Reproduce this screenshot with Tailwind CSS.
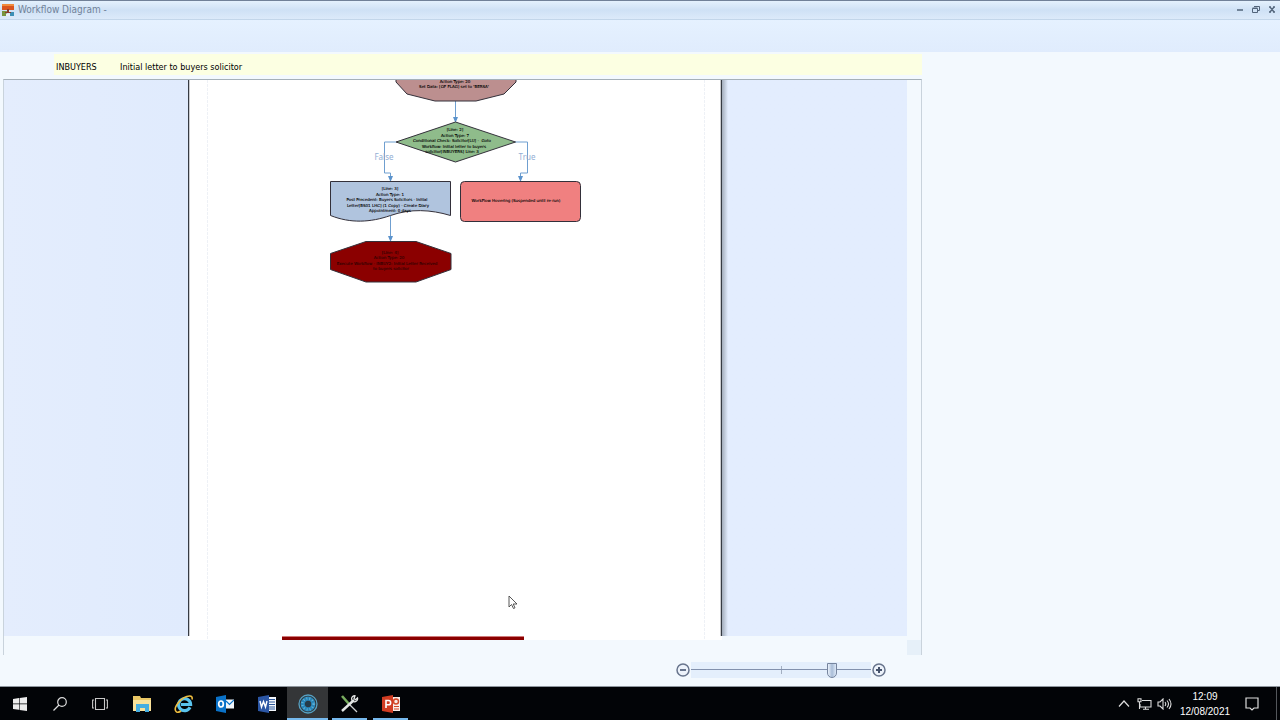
<!DOCTYPE html>
<html lang="en">
<head>
<meta charset="utf-8">
<meta name="viewport" content="width=device-width, initial-scale=1">
<title>Workflow Diagram</title>
<script src="https://cdn.jsdelivr.net/npm/@tailwindcss/browser@4"></script>
</head>
<body class="flex h-screen flex-col overflow-hidden bg-[#f3f9fe] font-['Noto_Sans','Liberation_Sans',sans-serif] text-black">

<header class="flex h-5 shrink-0 items-center justify-between border-t border-b border-t-[#718198] border-b-[#c3d6ea] bg-linear-to-b from-[#e4f1fd] via-[#cfe1f5] to-[#dceafa] pr-1 pl-0.5">
  <div class="flex items-center gap-1">
    <svg class="size-3" viewBox="0 0 12 12" aria-hidden="true"><path fill="#d9531e" d="M0 0h12v6H0z"/><path fill="#f08a3c" d="M0 0h12v2H0z"/><path fill="#78933d" d="M0 7h5l-1 5H0z"/><path fill="#3c8fb5" d="M8 8h4v4H8z"/><path fill="#8c3a2c" d="M5 5h2v3h2v1H3V8h2z"/><path fill="#e8eef4" d="M4 10h4v2H4z"/></svg>
    <h1 class="text-[10px] leading-4 text-[#71839a] font-['DejaVu_Sans_Condensed','Noto_Sans',sans-serif]">Workflow Diagram -</h1>
  </div>
  <div class="flex items-center gap-2 text-[#52647a]">
    <button type="button" aria-label="Minimize" class="h-3 w-2"><svg viewBox="0 0 8 12" class="h-3 w-2"><path d="M1 6h6" stroke="currentColor" stroke-width="1.500"/></svg></button>
    <button type="button" aria-label="Restore" class="h-3 w-2"><svg viewBox="0 0 8 12" class="h-3 w-2" fill="none" stroke="currentColor"><path d="M.5 4.500h5v4h-5zM.5 4h5M2 2.500h5.500v4H6" /></svg></button>
    <button type="button" aria-label="Close" class="h-3 w-2"><svg viewBox="0 0 8 12" class="h-3 w-2" stroke="currentColor" stroke-width="1.400"><path d="M2 3l4 5M6 3L2 8M1 3h2M5 3h2M1 8h2M5 8h2"/></svg></button>
  </div>
</header>

<div class="h-8 shrink-0 bg-linear-to-b from-[#e5f1ff] to-[#e0ecfd]"></div>

<main class="flex min-h-0 flex-1 flex-col">
  <section class="flex min-h-0 w-[72%] flex-1 flex-col">
    <div class="mt-0.5 mb-1 ml-[54px] flex h-[21px] shrink-0 items-center bg-[#fcffe2] text-[9px] leading-4 font-['DejaVu_Sans_Condensed','Noto_Sans',sans-serif]">
      <span class="w-[66px] pt-1 pl-0.5">INBUYERS</span>
      <span class="pt-1">Initial letter to buyers solicitor</span>
    </div>

    <div class="ml-[3px] flex min-h-0 flex-1 border-t border-r border-l border-t-[#a5b0b8] border-r-[#c9d3dc] border-l-[#c9d3dc]">
      <div class="mb-[19px] w-[184px] shrink-0 bg-linear-to-r from-[#e4edfd] to-[#e0ebfd]"></div>
      <div class="mb-[15px] w-[534px] shrink-0 overflow-hidden bg-white">
        <svg class="h-[560px] w-[534px]" viewBox="188 80 534 560" role="img" aria-label="Workflow diagram">
          <path d="M188.500 80v556M721.500 80v556" stroke="#363b43" stroke-width="1.500"/>
          <path d="M207.500 80v560M704.500 80v560" stroke="#eef1f6" stroke-dasharray="3 1"/>
          <g fill="none" stroke="#6f9fd0" stroke-width="1">
            <path d="M455.500 101v18M396 142h-11.500v31h6v6M515 142h12.500v31h-7v6M390.500 216v23"/>
          </g>
          <g fill="#5b93cc"><path d="M453 117h5l-2.500 6zM388 176h5l-2.500 6zM518 176h5l-2.500 6zM388 236h5l-2.500 6z"/></g>
          <g stroke="#33303a" stroke-width="1">
            <path fill="#bc8f8f" d="M396 78v4l11 12 28 7h41l28-7 12-12v-4z"/>
            <path fill="#8fbc8b" d="M396 142l59.500-20 60 20-60 20z"/>
            <path fill="#b0c4de" d="M330.500 181.500h120v34c-20-6-40-7-60 0s-40 8-60 0z"/>
            <rect fill="#f08080" x="460.500" y="181.500" width="120" height="40" rx="4"/>
            <path fill="#8b0000" d="M366 241.500h50l35 12v16l-35 12.500h-50l-35.500-12.500v-16z"/>
          </g>
          <path d="M282 638.500h242" stroke="#8b0000" stroke-width="3"/><path d="M282 636.500h242" stroke="#cf7a7a"/>
          <g class="font-['DejaVu_Sans','Noto_Sans',sans-serif] text-[4px]" text-anchor="middle" stroke="#000" stroke-width=".1">
            <text x="455" y="83">Action Type: 20</text>
            <text x="454" y="88">Set Data: [OF FLAG] set to 'BERSA'</text>
            <text x="455" y="131">[Line: 2]</text>
            <text x="455" y="137">Action Type: 7</text>
            <text x="452" y="142">Conditional Check: Solicitor[LU] - &#160;Goto</text>
            <text x="454" y="148">Workflow: Initial letter to buyers</text>
            <text x="452" y="153">solicitor[INBUYERS] Line: 3</text>
            <text x="390" y="190">[Line: 3]</text>
            <text x="390" y="196">Action Type: 1</text>
            <text x="387" y="201">Post Precedent: Buyers Solicitors - Initial</text>
            <text x="388" y="207">Letter[BS01 LHC] (1 Copy) - Create Diary</text>
            <text x="390" y="212">Appointment: 0 days</text>
            <text x="516" y="202">WorkFlow Hovering (Suspended until re-run)</text>
            <g opacity=".7">
              <text x="390" y="254">[Line: 4]</text>
              <text x="389" y="259">Action Type: 20</text>
              <text x="387" y="265">Execute Workflow - INBUY2: Initial Letter Received</text>
              <text x="391" y="270">to buyers solicitor</text>
            </g>
          </g>
          <g class="font-['Noto_Sans',sans-serif] text-[8px]" text-anchor="middle" fill="#92aed4"><text x="384" y="160">False</text><text x="527" y="160">True</text></g>
          <path d="M509 596v11l2.500-2.500 2 4 1.500-.7-1.800-3.800h3.800z" fill="#fff" stroke="#444" stroke-width=".9"/>
        </svg>
      </div>
      <div class="mb-[19px] flex-1 bg-linear-to-r from-[#a3adbb] via-[#e3edfe] via-[6px] to-[#e3edfe]"></div>
      <div class="flex w-[14px] flex-col justify-end"><div class="h-[15px] bg-[#e6f0f9]"></div></div>
    </div>
  </section>

  <div class="flex h-[31px] w-[72%] shrink-0 justify-end pr-9">
    <div class="flex h-[30px] items-center gap-px">
      <button type="button" aria-label="Zoom out" class="size-[14px]"><svg viewBox="0 0 14 14" fill="#edf3fb" stroke="#68758d"><circle cx="7" cy="7" r="6" stroke-width="1.500"/><path d="M4 7h6" stroke-width="2"/></svg></button>
      <div class="relative flex h-4 w-[180px] items-center bg-[#e4effc]">
        <span class="absolute top-1 left-1/2 h-2 w-px bg-[#a3afc1]"></span>
        <span class="absolute top-[7px] left-0 h-px w-full bg-[#8291ad]"></span>
        <input type="range" aria-label="Zoom" min="0" max="100" value="80" class="relative h-4 w-full appearance-none bg-transparent [&::-webkit-slider-thumb]:h-[15px] [&::-webkit-slider-thumb]:w-[10px] [&::-webkit-slider-thumb]:appearance-none [&::-webkit-slider-thumb]:rounded-b-[5px] [&::-webkit-slider-thumb]:border [&::-webkit-slider-thumb]:border-[#76859e] [&::-webkit-slider-thumb]:bg-linear-to-r [&::-webkit-slider-thumb]:from-[#eaf2fc] [&::-webkit-slider-thumb]:via-[#a9bdd7] [&::-webkit-slider-thumb]:to-[#dce8f7]">
      </div>
      <button type="button" aria-label="Zoom in" class="size-[14px]"><svg viewBox="0 0 14 14" fill="#edf3fb" stroke="#68758d"><circle cx="7" cy="7" r="6" stroke-width="1.500"/><path d="M4 7h6M7 4v6" stroke="#46536c" stroke-width="2"/></svg></button>
    </div>
  </div>
</main>

<footer class="flex h-[34px] shrink-0 items-stretch justify-between border-t border-[#8e969e] bg-[#020407] text-white">
  <nav class="flex" aria-label="Taskbar">
    <button type="button" aria-label="Start" class="grid w-10 place-items-center"><svg class="size-[14px]" viewBox="0 0 14 14" fill="#ececec"><path d="M0 2l6-.9v5.500H0zM6.600 1L14 0v6.600H6.600zM0 7.200h6v5.500L0 12zM6.600 7.200H14V14l-7.400-1z"/></svg></button>
    <button type="button" aria-label="Search" class="grid w-10 place-items-center"><svg class="size-[14px]" viewBox="0 0 14 14" fill="none" stroke="#dcdcdc" stroke-width="1.200"><circle cx="9" cy="5" r="4.300"/><path d="M6 8l-5.500 5.500"/></svg></button>
    <button type="button" aria-label="Task view" class="grid w-10 place-items-center"><svg class="size-4" viewBox="0 0 16 16" fill="none" stroke="#c8c8c8" stroke-width="1.100"><path d="M3.500 2.500h9v11h-9zM2 4H.6v8H2M14 4h1.400v8H14"/></svg></button>
    <button type="button" aria-label="File Explorer" class="grid w-11 place-items-center"><svg class="h-4 w-[18px]" viewBox="0 0 18 16"><path fill="#e9c765" d="M0 0h7l1 2h10v13H0z"/><path fill="#fae29a" d="M0 4h18v11H0z"/><path fill="#47aee0" d="M3 8h13v8h-4v-4H7v4H3z"/></svg></button>
    <button type="button" aria-label="Internet Explorer" class="grid w-10 place-items-center"><svg class="h-[18px] w-5" viewBox="0 0 20 18" fill="none"><path d="M16 12.300A6 6 0 1 1 16.600 9.500H7" stroke="#59c4ee" stroke-width="3.200"/><path d="M2.500 17C-2 13 8 1 15.500 1c2.500 0 3 1.500 2.500 3.500M2.500 17c1 .5 3 0 4.500-1" stroke="#eebd3f" stroke-width="1.600"/></svg></button>
    <button type="button" aria-label="Outlook" class="grid w-[42px] place-items-center"><svg class="size-[18px]" viewBox="0 0 18 18"><path fill="#0a72c8" d="M0 2l10-2v18L0 16z"/><path fill="#f1f6fb" d="M10 4.500h8v9h-8z"/><path d="M10 6l3.500 3.500L18 5" fill="none" stroke="#0a72c8" stroke-width="1.200"/><ellipse cx="5" cy="9" rx="2.300" ry="3" fill="none" stroke="#fff" stroke-width="1.700"/></svg></button>
    <button type="button" aria-label="Word" class="grid w-[41px] place-items-center"><svg class="size-[18px]" viewBox="0 0 18 18"><path fill="#f3f6fb" d="M10 2h8v14h-8z"/><path d="M11 4.500h6M11 7h6M11 9.500h6M11 12h6M11 14h6" stroke="#2b579a" stroke-width="1.200"/><path fill="#2b56a4" d="M0 2l11-2v18L0 16z"/><path d="M2 6l1.500 6L5.500 6.500 7.500 12 9 6" fill="none" stroke="#fff" stroke-width="1.400"/></svg></button>
    <button type="button" aria-label="Workflow application" class="grid w-[41px] place-items-center border-b-2 border-[#76b9ed] bg-[#343638]"><svg class="mt-0.5 size-5" viewBox="0 0 20 20" fill="none"><circle cx="10" cy="10" r="9" stroke="#56a0c2" stroke-width="1.300"/><circle cx="10" cy="10" r="5.300" stroke="#2684b7" stroke-width="4.200"/><circle cx="10" cy="10" r="5.600" stroke="#5fb0d6" stroke-width="2.500" stroke-dasharray="1 2"/><circle cx="10" cy="10" r="2.500" fill="#223c4c"/></svg></button>
    <button type="button" aria-label="Tools" class="ml-1 grid w-[35px] place-items-center border-b-2 border-[#76b9ed]"><svg class="mt-0.5 h-[18px] w-[19px]" viewBox="0 0 19 18" fill="none"><path d="M2 1l7 8" stroke="#78ad5f" stroke-width="2.600"/><path d="M9 9l8 8" stroke="#cfd2d3" stroke-width="1.200"/><path d="M2 16L14 5" stroke="#e4e6e5" stroke-width="2.400"/><path d="M17.500 3A3 3 0 1 1 15 .8L14 3.500l1.500 1.200z" stroke="#e4e6e5" stroke-width="1.300"/></svg></button>
    <button type="button" aria-label="PowerPoint" class="ml-1.5 grid w-[35px] place-items-center border-b-2 border-[#76b9ed]"><svg class="mt-0.5 size-[18px]" viewBox="0 0 18 18"><path fill="#f8ede9" d="M9 2h9v14H9z"/><path d="M12 11.500h5M12 14h5" stroke="#d24726"/><circle cx="14" cy="6.500" r="2.500" fill="none" stroke="#d24726" stroke-width="1.500"/><path fill="#d03c22" d="M0 2l11-2v18L0 16z"/><path d="M4 13V5.500h2.500a2 2 0 0 1 0 4.300H4" fill="none" stroke="#fff" stroke-width="1.600"/></svg></button>
  </nav>
  <div class="flex items-center">
    <button type="button" aria-label="Show hidden icons" class="w-5"><svg class="mx-auto h-3 w-3" viewBox="0 0 12 12" fill="none" stroke="#ddd" stroke-width="1.200"><path d="M1 8.500L6 3l5 5.500"/></svg></button>
    <button type="button" aria-label="Network" class="w-5"><svg class="mx-auto h-3 w-[15px]" viewBox="0 0 15 12" fill="none" stroke="#ddd" stroke-width="1.100"><path d="M5 2.500h9v6.500H3V6M8.500 9v2M6 11.300h6M1 .8h3v3H1zM2.500 4v7"/></svg></button>
    <button type="button" aria-label="Volume" class="w-5"><svg class="mx-auto h-3 w-[15px]" viewBox="0 0 15 12" fill="none" stroke="#ddd" stroke-width="1.100"><path d="M1 4h2l3-3v10L3 8H1zM8 4q1.500 2 0 4M10 2.500q3 3.500 0 7M12 1q4 5 0 10"/></svg></button>
    <div class="w-[62px] text-center font-['Liberation_Sans',sans-serif] text-[10px] leading-[15px]"><time class="block">12:09</time><time class="block">12/08/2021</time></div>
    <button type="button" aria-label="Notifications" class="w-8"><svg class="mx-auto h-[14px] w-[14px]" viewBox="0 0 14 14" fill="none" stroke="#ddd" stroke-width="1.200"><path d="M1 1h12v10H9l-2 2-2-2H1z"/></svg></button>
    <span class="ml-2 h-full w-[4px] border-l border-[#53575b]"></span>
  </div>
</footer>
</body>
</html>
